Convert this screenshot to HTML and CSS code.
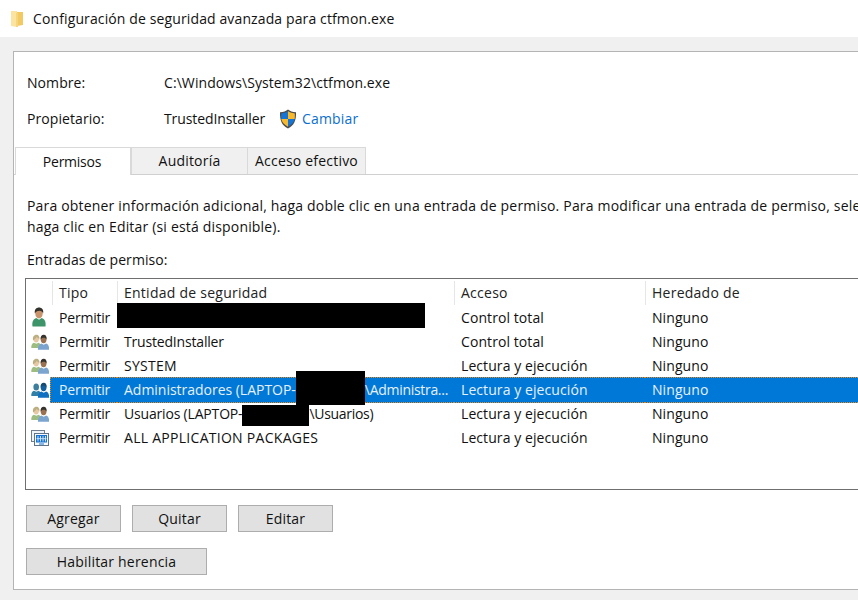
FILE: index.html
```html
<!DOCTYPE html>
<html lang="es">
<head>
<meta charset="utf-8">
<title>Configuración de seguridad avanzada para ctfmon.exe</title>
<link rel="stylesheet" href="styles.css">
</head>
<body>
<svg class="defs" width="0" height="0" aria-hidden="true">
  <defs>
    <symbol id="person" viewBox="0 0 18 20">
      <path d="M2.500 19.500c-.7-5 1-7.600 3.800-8.500l2.700 1.700 2.700-1.700c2.800 .9 4.500 3.500 3.800 8.500z" fill="#3c9468"/>
      <ellipse cx="9" cy="6.500" rx="3.700" ry="5" fill="#c9946c"/>
      <path d="M4.900 6.500c-.8-4 1.500-6 4.100-6s5 2 4.100 6c-.8-2-1.700-2.800-3.600-2.800-1.700 0-3.600 .7-4.600 2.800z" fill="#33312c"/>
    </symbol>
    <symbol id="pair" viewBox="0 0 18 16">
      <path d="M.3 14c-.3-3 1-4.800 2.700-5.300l2.300 1 2.300-1c1.700 .6 2.900 2.300 2.600 5.300z" fill="#9dbd80"/>
      <ellipse cx="5.200" cy="5" rx="2.700" ry="3.400" fill="#e6c9a2"/>
      <path d="M2.100 6.500c-.8-3.500 1-5.700 3.200-5.700 2.300 0 3.700 2 3 5-.6-1.300-1.500-2.300-3-2.500-.6 1.300-2 2.300-3.200 3.200z" fill="#bcae80"/>
      <path d="M7 15.700c-.4-3.500 1.200-5.500 3.300-6.200l2.400 1.200 2.400-1.200c2.100 .7 3.300 2.700 2.900 6.200z" fill="#7ba5cf"/>
      <ellipse cx="12.600" cy="5.500" rx="2.900" ry="3.700" fill="#9a7250"/>
      <path d="M9.700 5.500c-.5-3 1-4.800 3-4.800s3.300 1.800 2.800 4.800c-.6-1.200-1.400-1.800-2.800-1.800s-2.400 .6-3 1.800z" fill="#35322c"/>
    </symbol>
    <symbol id="pair-selected" viewBox="0 0 18 16">
      <path d="M.3 14c-.3-3 1-4.800 2.700-5.300l2.300 1 2.300-1c1.700 .6 2.900 2.300 2.600 5.300z" fill="#2f7fa6"/>
      <ellipse cx="5.200" cy="5" rx="2.800" ry="3.500" fill="#3d7e9e"/>
      <path d="M7 15.700c-.4-3.500 1.200-5.500 3.300-6.200l2.400 1.200 2.400-1.200c2.100 .7 3.300 2.700 2.900 6.200z" fill="#0f6fc0"/>
      <ellipse cx="12.600" cy="5.500" rx="2.900" ry="3.700" fill="#145f9e"/>
      <path d="M9.700 5.500c-.5-3 1-4.800 3-4.800s3.300 1.800 2.800 4.800c-.6-1.200-1.400-1.800-2.800-1.800s-2.400 .6-3 1.800z" fill="#174a72"/>
    </symbol>
    <symbol id="packages" viewBox="0 0 18 16">
      <rect x=".5" y=".5" width="13" height="11" fill="#eef3f8" stroke="#6f7f90"/>
      <rect x="3.500" y="3.500" width="14" height="12" fill="#f7fafd" stroke="#5f7488"/>
      <rect x="5" y="5" width="11" height="7.500" fill="#1873d0"/>
      <path d="M7 6v5.500M9.500 6v5.500M12 6v5.500M14.500 6v5.500M5.500 8.700h10" stroke="#d8ecff" stroke-width=".9"/>
      <path d="M8 14h5" stroke="#1873d0"/>
    </symbol>
  </defs>
</svg>

<header class="titlebar">
  <svg class="folder" viewBox="0 0 12 16" width="12" height="16" aria-hidden="true">
    <path d="M0 0h6v16l-6-1z" fill="#fbe3a0"/>
    <path d="M6 1h6v13l-6 1z" fill="#f3ca62"/>
    <path d="M5 2h2v14H5z" fill="#f6d57e"/>
  </svg>
  <span class="titletext">Configuración de seguridad avanzada para ctfmon.exe</span>
</header>

<main class="panel">
  <div class="info">
    <div class="info-row">
      <span class="info-label">Nombre:</span>
      <span>C:\Windows\System32\ctfmon.exe</span>
    </div>
    <div class="info-row">
      <span class="info-label">Propietario:</span>
      <span class="owner">TrustedInstaller</span>
      <svg class="shield" viewBox="0 0 18 20" width="18" height="20" aria-hidden="true">
        <path d="M9 .5c2 1.700 4.500 2.500 8 2.700 .3 7.800-1.800 13.300-8 16.300C2.800 16.500 .7 11 1 3.200 4.500 3 7 2.200 9 .5z" fill="#4d4d4d"/>
        <path d="M9 2.300V10H2.300C2.100 8 2.100 6.300 2.200 4.400 4.800 4.100 7.100 3.500 9 2.300z" fill="#1574d4"/>
        <path d="M9 2.300c1.900 1.200 4.200 1.800 6.800 2.100.1 1.900.1 3.600-.1 5.600H9z" fill="#f8b92c"/>
        <path d="M2.300 10H9v7.800c-3.900-2.100-6-4.800-6.700-7.800z" fill="#f8b92c"/>
        <path d="M9 10h6.700c-.7 3-2.800 5.700-6.700 7.800z" fill="#1574d4"/>
      </svg>
      <a class="link" href="#">Cambiar</a>
    </div>
  </div>

  <nav class="tabs">
    <span class="tab tab-active">Permisos</span>
    <span class="tab tab-second">Auditoría</span>
    <span class="tab tab-third">Acceso efectivo</span>
  </nav>

  <section class="content">
    <p class="desc">Para obtener información adicional, haga doble clic en una entrada de permiso. Para modificar una entrada de permiso, seleccione la entrada y<br>haga clic en Editar (si está disponible).</p>
    <p class="entries-label">Entradas de permiso:</p>

    <div class="list">
      <div class="row head">
        <span class="c-icon"></span>
        <span class="c-type">Tipo</span>
        <span class="c-name">Entidad de seguridad</span>
        <span class="c-access">Acceso</span>
        <span class="c-inherit">Heredado de</span>
      </div>
      <div class="row">
        <span class="c-icon"><svg class="ico-single"><use href="#person"/></svg></span>
        <span class="c-type">Permitir</span>
        <span class="c-name"><span class="redact redact-a"></span></span>
        <span class="c-access">Control total</span>
        <span class="c-inherit">Ninguno</span>
      </div>
      <div class="row">
        <span class="c-icon"><svg class="ico"><use href="#pair"/></svg></span>
        <span class="c-type">Permitir</span>
        <span class="c-name tight">TrustedInstaller</span>
        <span class="c-access">Control total</span>
        <span class="c-inherit">Ninguno</span>
      </div>
      <div class="row">
        <span class="c-icon"><svg class="ico"><use href="#pair"/></svg></span>
        <span class="c-type">Permitir</span>
        <span class="c-name caps">SYSTEM</span>
        <span class="c-access">Lectura y ejecución</span>
        <span class="c-inherit">Ninguno</span>
      </div>
      <div class="row selected">
        <span class="c-icon"><svg class="ico"><use href="#pair-selected"/></svg></span>
        <span class="c-type">Permitir</span>
        <span class="c-name admin">Administradores (LAPTOP-<span class="redact redact-b"></span><span class="tail">\Administra...</span></span>
        <span class="c-access">Lectura y ejecución</span>
        <span class="c-inherit">Ninguno</span>
      </div>
      <div class="row">
        <span class="c-icon"><svg class="ico"><use href="#pair"/></svg></span>
        <span class="c-type">Permitir</span>
        <span class="c-name tight">Usuarios (LAPTOP-<span class="redact redact-c"></span><span class="tail">\Usuarios)</span></span>
        <span class="c-access">Lectura y ejecución</span>
        <span class="c-inherit">Ninguno</span>
      </div>
      <div class="row">
        <span class="c-icon"><svg class="ico"><use href="#packages"/></svg></span>
        <span class="c-type">Permitir</span>
        <span class="c-name caps">ALL APPLICATION PACKAGES</span>
        <span class="c-access">Lectura y ejecución</span>
        <span class="c-inherit">Ninguno</span>
      </div>
    </div>

    <div class="actions">
      <button class="btn" type="button">Agregar</button>
      <button class="btn" type="button">Quitar</button>
      <button class="btn" type="button">Editar</button>
    </div>
    <button class="btn btn-wide" type="button">Habilitar herencia</button>
  </section>
</main>
</body>
</html>
```

FILE: styles.css
```css
* { box-sizing: border-box; }
html, body { height: 100%; }
body {
  margin: 0;
  width: 858px;
  height: 600px;
  overflow: hidden;
  background: #f0f0f0;
  color: #111;
  font-family: "Open Sans", "Noto Sans", sans-serif;
  font-size: 14px;
  letter-spacing: 0.08px;
}
.defs { position: absolute; }

.titlebar {
  height: 37px;
  background: #fff;
  display: flex;
  align-items: center;
  padding-left: 11px;
}
.folder { margin: 0 10px 0 0; }
.titletext { letter-spacing: 0.12px; }

.panel {
  margin: 14px 0 0 13px;
  width: 900px;
  height: 539px;
  background: #fff;
  border: 1px solid #b4b4b4;
}

.info { padding: 13px 0 0 13px; height: 95px; }
.info-row {
  display: flex;
  align-items: center;
  height: 35px;
}
.info-row + .info-row { margin-top: 1px; }
.info-label { width: 137px; }
.owner { letter-spacing: -0.1px; }
.shield { margin: 0 2px 0 14px; }
.link { color: #0a6fd0; text-decoration: none; margin-left: 3px; letter-spacing: 0.15px; }

.tabs {
  display: flex;
  height: 28px;
  padding-left: 1px;
  border-bottom: 1px solid #d0d0d0;
}
.tab {
  height: 27px;
  background: #f0f0f0;
  border: 1px solid #d9d9d9;
  border-bottom: 0;
  display: flex;
  align-items: center;
  justify-content: center;
  margin-left: -1px;
  letter-spacing: 0.2px;
  padding-bottom: 2px;
}
.tab-active {
  width: 116px;
  height: 28px;
  margin-left: 0;
  background: #fff;
  border-color: #d9d9d9;
  padding: 0 2px 0 0;
  letter-spacing: -0.25px;
}
.tab-second { width: 117px; margin-left: 0; }
.tab-third { width: 119px; }

.content { padding: 20px 0 0 11px; }
.desc {
  margin: 0 0 0 2px;
  line-height: 21px;
  white-space: nowrap;
  height: 42px;
  letter-spacing: 0.18px;
}
.entries-label { margin: 13px 0 0 2px; line-height: 20px; height: 20px; }

.list {
  margin-top: 8px;
  width: 860px;
  height: 212px;
  border: 1px solid #6f6f6f;
  padding-top: 2px;
  position: relative;
}
.row {
  display: grid;
  grid-template-columns: 26px 65px 337px 191px 1fr;
  height: 24px;
  line-height: 26px;
  white-space: nowrap;
}
.row > span { padding-left: 6px; overflow: hidden; }
.row > .c-icon { padding-left: 0; overflow: visible; display: flex; align-items: center; justify-content: center; }
.row > .c-name { overflow: visible; position: relative; padding-left: 7px; }
.row > .c-type, .row > .c-access, .row > .c-inherit { padding-left: 7px; }
.row > .c-type { letter-spacing: -0.2px; }
.tight { letter-spacing: -0.18px; }
.caps { letter-spacing: 0.28px; }
.admin { letter-spacing: -0.02px; }
.tail { letter-spacing: -0.3px; }
.head { line-height: 24px; letter-spacing: 0.25px; }
.head > span { border-left: 1px solid #e6e6e6; color: #222; }
.head > .c-icon { border-left: 0; }
.row.head > .c-type, .row.head > .c-name, .row.head > .c-access, .row.head > .c-inherit { padding-left: 6px; letter-spacing: 0.25px; }
.ico { width: 18px; height: 16px; margin-left: 1px; }
.ico-single { width: 18px; height: 20px; }

.selected > .c-type,
.selected > .c-name,
.selected > .c-access,
.selected > .c-inherit {
  background: #0078d7;
  color: #e6f1fb;
  border-top: 1px dotted #e08a20;
  border-bottom: 1px dotted #e08a20;
  line-height: 24px;
}
.row.selected > .c-type {
  border-left: 1px dotted #e08a20;
  margin-left: -2px;
  padding-left: 8px;
}
.selected > .c-icon { position: relative; z-index: 1; }

.redact { display: inline-block; background: #000; }
.redact-a { position: absolute; left: 0; top: -2px; width: 308px; height: 25px; }
.redact-b { width: 69px; height: 34px; margin: -9px 0 -3px; vertical-align: middle; }
.redact-c { width: 67px; height: 21px; margin: -2px 0; vertical-align: middle; }

.actions {
  display: flex;
  gap: 11px;
  margin: 15px 0 0 1px;
}
.btn {
  display: block;
  width: 95px;
  height: 27px;
  padding: 0;
  background: #e1e1e1;
  border: 1px solid #adadad;
  border-radius: 0;
  color: #111;
  font: inherit;
  letter-spacing: 0.2px;
}
.btn-wide { width: 181px; margin: 16px 0 0 1px; }
```
